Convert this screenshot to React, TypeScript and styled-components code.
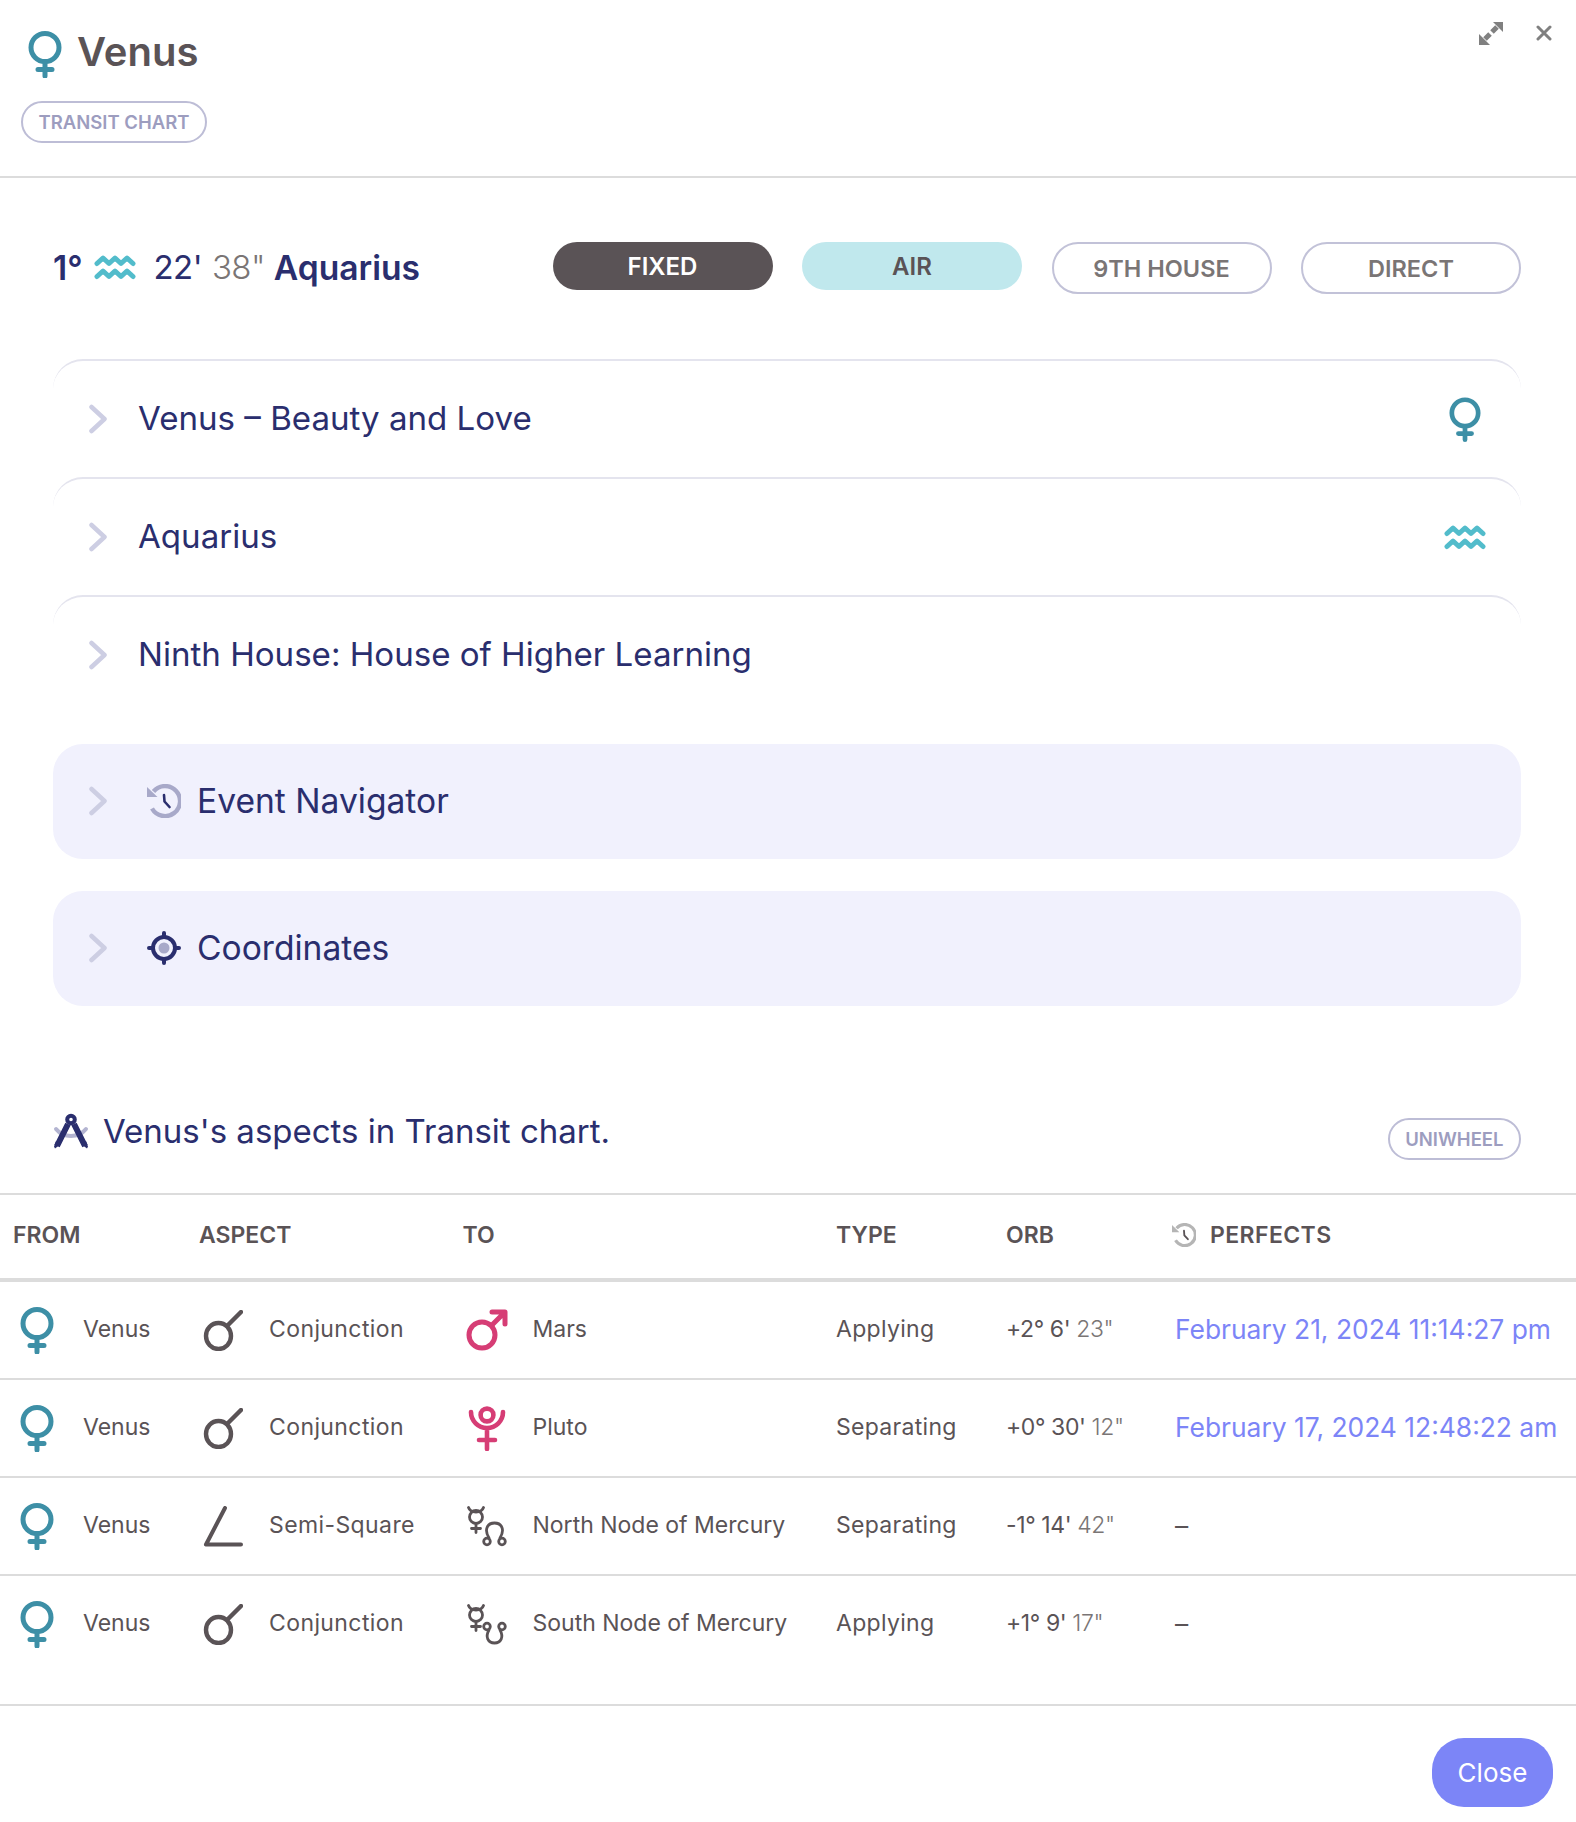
import { createGlobalStyle, styled } from 'styled-components';

const NAVY = '#2a2e6e';
const TEAL = '#3d8fa6';
const AQUA = '#52bccb';
const PINK = '#d63d75';
const INK = '#5a5356';

const GlobalStyle = createGlobalStyle`
  body {
    margin: 0;
    background: #fff;
    font-family: Inter, "Liberation Sans", sans-serif;
    color: ${INK};
  }
`;

const Glyph = styled.svg`
  display: block;
  flex: none;
  fill: none;
  stroke-linecap: round;
  stroke-linejoin: round;
`;

type GlyphProps = { color?: string };

const VenusGlyph = ({ color = TEAL, width = 34, height = 47 }: GlyphProps & { width?: number; height?: number }) => (
  <Glyph width={width} height={height} viewBox="0 0 34 47" stroke={color} strokeWidth="5">
    <circle cx="17" cy="16.5" r="14" />
    <path d="M17 31v14M10 38.5h14" />
  </Glyph>
);

const AquariusGlyph = ({ width = 42, height = 26 }: { width?: number; height?: number }) => (
  <Glyph width={width} height={height} viewBox="0 0 42 26" stroke={AQUA} strokeWidth="5">
    <path d="M3 9.5l6-5.5 6 5.5 6-5.5 6 5.5 6-5.5 6 5.500" />
    <path d="M3 22.500l6-5.500 6 5.500 6-5.500 6 5.500 6-5.500 6 5.500" />
  </Glyph>
);

const MarsGlyph = () => (
  <Glyph width="42" height="42" viewBox="0 0 42 42" stroke={PINK} strokeWidth="5">
    <circle cx="16" cy="26" r="13" />
    <path d="M26 16L38 4M26 3h13v12" />
  </Glyph>
);

const PlutoGlyph = () => (
  <Glyph width="38" height="45" viewBox="0 0 38 45" stroke={PINK} strokeWidth="4.600">
    <circle cx="19" cy="9" r="6.400" />
    <path d="M3 6a16 16 0 0 0 32 0M19 23v20M11 34h16" />
  </Glyph>
);

const ConjunctionGlyph = () => (
  <Glyph width="40" height="41" viewBox="0 0 40 41" stroke={INK} strokeWidth="4.400">
    <ellipse cx="15.500" cy="26" rx="12.500" ry="13" />
    <path d="M25 15L38 2" />
  </Glyph>
);

const SemiSquareGlyph = () => (
  <Glyph width="40" height="41" viewBox="0 0 40 41" stroke={INK} strokeWidth="4">
    <path d="M22 2L3 38.500h35" />
  </Glyph>
);

const Mercury = () => (
  <>
    <path d="M1.500 1.500c1 3 3.500 4.500 7.500 4.500s6.500-1.500 7.500-4.500" />
    <circle cx="9" cy="11" r="6.500" />
    <path d="M9 17.500v9M4.500 22.500h9" />
  </>
);

const NorthNodeGlyph = () => (
  <Glyph width="40" height="41" viewBox="0 0 40 41" stroke={INK} strokeWidth="2.800">
    <Mercury />
    <circle cx="20" cy="35.500" r="3.300" />
    <circle cx="35" cy="35.500" r="3.300" />
    <path d="M22 32c-5-8-2-15 5.500-15s10.500 7 5.500 15" />
  </Glyph>
);

const SouthNodeGlyph = () => (
  <Glyph width="40" height="41" viewBox="0 0 40 41" stroke={INK} strokeWidth="2.800">
    <Mercury />
    <circle cx="20" cy="22.500" r="3.300" />
    <circle cx="35" cy="22.500" r="3.300" />
    <path d="M22 26c-4 7-1 13 5.500 13s9.500-6 5.500-13" />
  </Glyph>
);

const HistoryGlyph = ({ size = 34, hand = NAVY, color = '#a8a9c9' }: { size?: number; hand?: string; color?: string }) => (
  <Glyph width={size} height={size} viewBox="0 0 34 34" stroke={color} strokeWidth="4.400">
    <path d="M6.500 7.500A15 15 0 1 1 5 24.500" strokeLinecap="butt" />
    <path d="M0 3v10h10.500z" fill={color} stroke="none" />
    <path d="M17 11l.5 6.500 5 5.500" stroke={hand} strokeWidth="2.600" />
  </Glyph>
);

const CrosshairGlyph = () => (
  <Glyph width="34" height="34" viewBox="0 0 34 34" stroke={NAVY} strokeWidth="4">
    <circle cx="17" cy="17" r="11" />
    <circle cx="17" cy="17" r="5.500" fill="#a8a9c9" stroke="none" />
    <path d="M17 2v3M17 29v3M2 17h3M29 17h3" />
  </Glyph>
);

const CompassGlyph = () => (
  <Glyph width="36" height="36" viewBox="0 0 36 36" stroke={NAVY} strokeWidth="6">
    <path d="M3 16c4 5 9 7 15 7s11-2 15-7" stroke="#b3b4d1" strokeWidth="4" />
    <circle cx="18" cy="6.500" r="3.800" strokeWidth="4" />
    <path d="M15 11L4 33M21 11l11 22" strokeLinecap="butt" />
    <path d="M1 33.500L3 28l5 3-6 4.500zM35 33.500L33 28l-5 3 6 4.500z" fill={NAVY} stroke="none" />
  </Glyph>
);

const ExpandGlyph = () => (
  <Glyph width="24" height="24" viewBox="0 0 24 24" stroke="#808080" strokeWidth="5">
    <path d="M14 1h10v10z" fill="#808080" stroke="none" />
    <path d="M0 13v11h11z" fill="#808080" stroke="none" />
    <path d="M18 6l-5 5M6 18l5-5" strokeLinecap="butt" />
  </Glyph>
);

const CloseGlyph = () => (
  <Glyph width="16" height="16" viewBox="0 0 16 16" stroke="#808080" strokeWidth="3">
    <path d="M2 2l12 12M14 2L2 14" />
  </Glyph>
);

const ChevronGlyph = () => (
  <Glyph width="18" height="30" viewBox="0 0 18 30" stroke="#cdcee3" strokeWidth="4.500">
    <path d="M2.500 3l13 12-13 12" />
  </Glyph>
);

const Page = styled.div`
  width: 1576px;
  min-height: 1822px;
  background: #fff;
`;

const Header = styled.header`
  height: 155px;
  padding: 21px 24px 0 21px;
  display: flex;
  justify-content: space-between;
  align-items: flex-start;
  border-bottom: 2px solid #dcdcdc;
`;

const HeaderLeft = styled.div`
  display: flex;
  flex-direction: column;
  align-items: flex-start;
  gap: 23px;
`;

const TitleRow = styled.div`
  display: flex;
  align-items: center;
  gap: 15px;
  padding: 10px 0 0 7px;
  height: 47px;
`;

const Title = styled.h1`
  margin: 0 0 7px;
  font-size: 40px;
  font-weight: 600;
  color: ${INK};
`;

const Badge = styled.div`
  height: 42px;
  padding: 0 15.5px;
  box-sizing: border-box;
  display: flex;
  align-items: center;
  border: 2px solid #bdbdd6;
  border-radius: 21px;
  font-size: 18.5px;
  font-weight: 600;
  color: #9d9dbf;
`;

const WindowActions = styled.div`
  display: flex;
  gap: 33px;
  align-items: center;
`;

const Main = styled.main`
  padding: 64px 55px 0 53px;
`;

const Summary = styled.div`
  display: flex;
  align-items: flex-start;
  justify-content: space-between;
  height: 52px;
`;

const Position = styled.div`
  display: flex;
  align-items: center;
  height: 50px;
  font-size: 33px;
  color: ${NAVY};
`;

const Strong = styled.span`
  font-weight: 600;
  font-size: 33.6px;
`;

const Minutes = styled.span`
  margin-right: 10px;
  letter-spacing: -0.6px;
`;

const Dim = styled.span`
  font-weight: 300;
  color: #7a7575;
`;

const Seconds = styled(Dim)`
  margin-right: 9px;
  letter-spacing: -0.6px;
`;

const Spaced = styled.span<{ $left?: number; $right?: number }>`
  margin-left: ${(p) => p.$left ?? 0}px;
  margin-right: ${(p) => p.$right ?? 0}px;
  display: inline-flex;
`;

const Pills = styled.div`
  display: flex;
  gap: 29.5px;
`;

const Pill = styled.div<{ $tone: 'dark' | 'air' | 'outline' }>`
  width: 220px;
  height: ${(p) => (p.$tone === 'outline' ? 52 : 48)}px;
  box-sizing: border-box;
  display: flex;
  align-items: center;
  justify-content: center;
  border-radius: 26px;
  font-size: ${(p) => (p.$tone === 'outline' ? 23.5 : 24)}px;
  font-weight: 600;
  background: ${(p) => (p.$tone === 'dark' ? '#5a5356' : p.$tone === 'air' ? '#c0e8ed' : '#fff')};
  color: ${(p) => (p.$tone === 'dark' ? '#fff' : p.$tone === 'air' ? '#5a5356' : '#7a7575')};
  border: ${(p) => (p.$tone === 'outline' ? '2px solid #c2c2d8' : 'none')};
`;

const Accordions = styled.div`
  margin-top: 65px;
`;

const AccordionRow = styled.div`
  height: 118px;
  box-sizing: border-box;
  display: flex;
  align-items: center;
  padding: 0 36px 0 36px;
  border-top: 2px solid #e4e4ee;
  border-radius: 30px 30px 0 0;
`;

const AccordionTitle = styled.div`
  flex: 1;
  margin-left: 31px;
  padding-bottom: 2px;
  font-size: 33.1px;
  color: ${NAVY};
`;

const IconSlot = styled.div`
  width: 41px;
  display: flex;
  justify-content: center;
`;

const Panels = styled.div`
  margin-top: 31px;
  display: flex;
  flex-direction: column;
  gap: 32px;
`;

const Panel = styled.div`
  height: 115px;
  box-sizing: border-box;
  display: flex;
  align-items: center;
  gap: 40px;
  padding: 0 36px 2px;
  border-radius: 30px;
  background: #f1f1fd;
`;

const PanelLabel = styled.div`
  display: flex;
  align-items: center;
  gap: 16px;
  font-size: 33.6px;
  color: ${NAVY};
`;

const AspectsHead = styled.div`
  height: 187px;
  box-sizing: border-box;
  padding: 112px 55px 0 53px;
  display: flex;
  justify-content: space-between;
  align-items: flex-start;
`;

const AspectsTitle = styled.div`
  display: flex;
  align-items: center;
  gap: 14px;
  margin-top: -7px;
  font-size: 33px;
  color: ${NAVY};
`;

const COLUMNS = '186px 263.5px 373.5px 170px 166px 1fr';

const TableHead = styled.div`
  display: grid;
  grid-template-columns: ${COLUMNS};
  align-items: center;
  height: 80px;
  padding: 0 0 3px 13px;
  border-top: 2px solid #dcdcdc;
  border-bottom: 4px solid #dcdcdc;
  font-size: 23px;
  font-weight: 600;
`;

const PerfectsHead = styled.div`
  display: flex;
  align-items: center;
  gap: 14px;
  letter-spacing: 0.4px;
`;

const Row = styled.div`
  display: grid;
  grid-template-columns: ${COLUMNS};
  align-items: center;
  height: 93px;
  padding: 0 0 3px 13px;
  font-size: 23px;
  & + & {
    border-top: 2px solid #dcdcdc;
  }
`;

const Cell = styled.div<{ $tracking?: number }>`
  display: flex;
  align-items: center;
  white-space: nowrap;
  letter-spacing: ${(p) => p.$tracking ?? 0}px;
`;

const RowIcon = styled.div`
  width: 48px;
  margin: 3px 22px 0 0;
  display: flex;
  justify-content: center;
`;

const Perfects = styled.div<{ $date?: boolean }>`
  padding-left: 3px;
  font-size: 26.4px;
  white-space: nowrap;
  color: ${(p) => (p.$date ? '#7c85f7' : INK)};
`;

const Footer = styled.footer`
  margin-top: 32px;
  padding: 32px 23px 0 0;
  border-top: 2px solid #dcdcdc;
  display: flex;
  justify-content: flex-end;
`;

const CloseButton = styled.button`
  width: 121px;
  height: 69px;
  border: none;
  border-radius: 32px;
  background: #7c85f7;
  color: #fff;
  font-family: inherit;
  font-size: 26px;
`;

type Aspect = {
  aspectIcon: React.ReactNode;
  aspect: string;
  toIcon: React.ReactNode;
  to: string;
  type: string;
  orb: string;
  seconds: string;
  perfects?: string;
};

const ASPECTS: Aspect[] = [
  { aspectIcon: <ConjunctionGlyph />, aspect: 'Conjunction', toIcon: <MarsGlyph />, to: 'Mars', type: 'Applying', orb: "+2° 6'", seconds: '23"', perfects: 'February 21, 2024 11:14:27 pm' },
  { aspectIcon: <ConjunctionGlyph />, aspect: 'Conjunction', toIcon: <PlutoGlyph />, to: 'Pluto', type: 'Separating', orb: "+0° 30'", seconds: '12"', perfects: 'February 17, 2024 12:48:22 am' },
  { aspectIcon: <SemiSquareGlyph />, aspect: 'Semi-Square', toIcon: <NorthNodeGlyph />, to: 'North Node of Mercury', type: 'Separating', orb: "-1° 14'", seconds: '42"' },
  { aspectIcon: <ConjunctionGlyph />, aspect: 'Conjunction', toIcon: <SouthNodeGlyph />, to: 'South Node of Mercury', type: 'Applying', orb: "+1° 9'", seconds: '17"' },
];

const App = () => {
  return (
    <Page>
      <GlobalStyle />
      <Header>
        <HeaderLeft>
          <TitleRow>
            <VenusGlyph />
            <Title>Venus</Title>
          </TitleRow>
          <Badge>TRANSIT CHART</Badge>
        </HeaderLeft>
        <WindowActions>
          <ExpandGlyph />
          <CloseGlyph />
        </WindowActions>
      </Header>

      <Main>
        <Summary>
          <Position>
            <Strong>1°</Strong>
            <Spaced $left={11} $right={18}>
              <AquariusGlyph />
            </Spaced>
            <Minutes>22'</Minutes>
            <Seconds>38"</Seconds>
            <Strong>Aquarius</Strong>
          </Position>
          <Pills>
            <Pill $tone="dark">FIXED</Pill>
            <Pill $tone="air">AIR</Pill>
            <Pill $tone="outline">9TH HOUSE</Pill>
            <Pill $tone="outline">DIRECT</Pill>
          </Pills>
        </Summary>

        <Accordions>
          <AccordionRow>
            <ChevronGlyph />
            <AccordionTitle>Venus – Beauty and Love</AccordionTitle>
            <IconSlot>
              <VenusGlyph width={32} />
            </IconSlot>
          </AccordionRow>
          <AccordionRow>
            <ChevronGlyph />
            <AccordionTitle>Aquarius</AccordionTitle>
            <IconSlot>
              <AquariusGlyph />
            </IconSlot>
          </AccordionRow>
          <AccordionRow>
            <ChevronGlyph />
            <AccordionTitle>Ninth House: House of Higher Learning</AccordionTitle>
          </AccordionRow>
        </Accordions>

        <Panels>
          <Panel>
            <ChevronGlyph />
            <PanelLabel>
              <HistoryGlyph />
              Event Navigator
            </PanelLabel>
          </Panel>
          <Panel>
            <ChevronGlyph />
            <PanelLabel>
              <CrosshairGlyph />
              Coordinates
            </PanelLabel>
          </Panel>
        </Panels>
      </Main>

      <AspectsHead>
        <AspectsTitle>
          <CompassGlyph />
          Venus's aspects in Transit chart.
        </AspectsTitle>
        <Badge>UNIWHEEL</Badge>
      </AspectsHead>

      <TableHead>
        <div>FROM</div>
        <div>ASPECT</div>
        <div>TO</div>
        <div>TYPE</div>
        <div>ORB</div>
        <PerfectsHead>
          <HistoryGlyph size={24} color="#b5b5b5" hand="#5a5356" />
          PERFECTS
        </PerfectsHead>
      </TableHead>

      {ASPECTS.map((row) => (
        <Row key={row.to}>
          <Cell>
            <RowIcon>
              <VenusGlyph />
            </RowIcon>
            Venus
          </Cell>
          <Cell $tracking={0.4}>
            <RowIcon>{row.aspectIcon}</RowIcon>
            {row.aspect}
          </Cell>
          <Cell>
            <RowIcon>{row.toIcon}</RowIcon>
            {row.to}
          </Cell>
          <Cell $tracking={0.3}>{row.type}</Cell>
          <Cell $tracking={-0.4}>
            {row.orb}&nbsp;<Dim>{row.seconds}</Dim>
          </Cell>
          <Perfects $date={!!row.perfects}>{row.perfects ?? '–'}</Perfects>
        </Row>
      ))}

      <Footer>
        <CloseButton>Close</CloseButton>
      </Footer>
    </Page>
  );
};

export default App;
